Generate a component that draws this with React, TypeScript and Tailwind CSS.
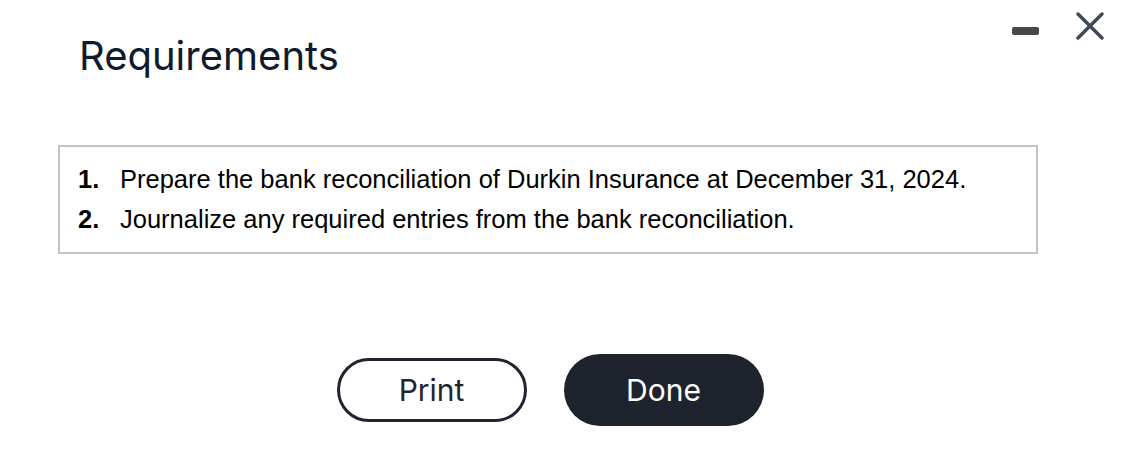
export default function App() {
  const items = [
    "Prepare the bank reconciliation of Durkin Insurance at December 31, 2024.",
    "Journalize any required entries from the bank reconciliation.",
  ];

  return (
    <div className="w-[1134px] h-[464px] bg-white flex flex-col font-['Inter',sans-serif]">
      {/* header */}
      <div className="flex items-start justify-between h-[145px]">
        <h1 className="pl-[79px] pt-[32px] text-[40px] leading-[48px] text-[#0f1a2c]">
          Requirements
        </h1>
        <div className="flex items-start pt-[12px] pr-[30px]">
          <button type="button" className="mt-[15px] mr-[37px]" aria-label="Minimize">
            <span className="block w-[27px] h-[8px] rounded-[2px] bg-[#45484d]" />
          </button>
          <button type="button" aria-label="Close">
            <svg width="28" height="28" viewBox="0 0 28 28" fill="none">
              <path
                d="M2 2 L26 26 M26 2 L2 26"
                stroke="#3f4753"
                strokeWidth="3.4"
                strokeLinecap="round"
              />
            </svg>
          </button>
        </div>
      </div>

      <div className="pl-[58px] w-[1038px]">
        {/* requirement list */}
        <ol className="border-2 border-[#c4c4c4] h-[109px] pl-[18px] pt-[12px] font-['Liberation_Sans',Arial,sans-serif] text-[25.5px] text-black">
          {items.map((text, i) => (
            <li key={i} className="flex h-[40px] leading-[40px]">
              <span className="w-[42px] font-bold">{i + 1}.</span>
              <span>{text}</span>
            </li>
          ))}
        </ol>

        {/* actions */}
        <div className="flex items-center justify-center gap-[37px] mt-[100px] pl-[4px]">
          <button
            type="button"
            className="w-[190px] h-[64px] rounded-full border-[3px] border-[#1f2430] text-[30px] text-[#1f2430]"
          >
            Print
          </button>
          <button
            type="button"
            className="w-[200px] h-[72px] rounded-full bg-[#1f232d] text-[30px] text-white"
          >
            Done
          </button>
        </div>
      </div>
    </div>
  );
}
